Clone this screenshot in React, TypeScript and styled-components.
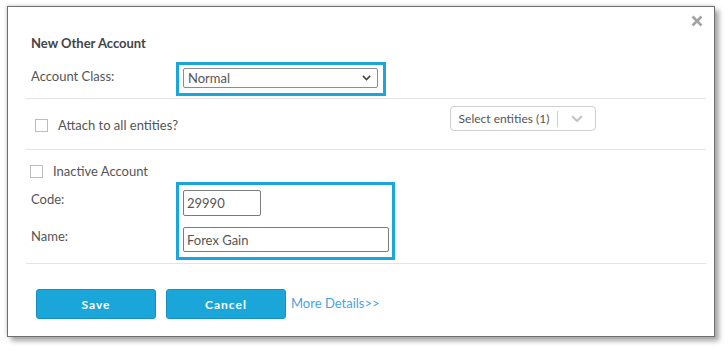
import React from "react";
import styled, { createGlobalStyle } from "styled-components";

const GlobalStyle = createGlobalStyle`
  html, body {
    margin: 0;
    padding: 0;
    background: #ffffff;
    font-family: Lato, "Open Sans", Arial, sans-serif;
  }
`;

const Page = styled.div`
  width: 728px;
  height: 351px;
  padding: 6px 0 0 7px;
  box-sizing: border-box;
`;

const Dialog = styled.div`
  position: relative;
  width: 708px;
  height: 331px;
  box-sizing: border-box;
  background: #fff;
  border: 1px solid #6f6f6f;
  box-shadow: 4px 4px 5px rgba(0, 0, 0, 0.35), -1px -1px 3px rgba(0, 0, 0, 0.15);
`;

const Close = styled.button`
  position: absolute;
  top: 8px;
  right: 10px;
  width: 14px;
  height: 14px;
  padding: 0;
  border: 0;
  background: none;
  cursor: pointer;
`;

const Content = styled.div`
  margin: 0 8px 0 18px;
  padding-top: 28px;
  color: #555;
  font-size: 13px;
  line-height: 16px;
`;

const Title = styled.div`
  padding-left: 5px;
  font-weight: 700;
  color: #444;
  margin-bottom: 11px;
`;

const Row = styled.div`
  display: flex;
  align-items: flex-start;
`;

const Label = styled.div<{ $top?: number }>`
  width: 145px;
  padding-left: 5px;
  padding-top: ${(p) => p.$top ?? 0}px;
`;

const LabelCol = styled.div`
  display: flex;
  flex-direction: column;
  padding-top: 9px;
  gap: 21px;
`;

const Highlight = styled.div<{ $w: number; $pad: string }>`
  width: ${(p) => p.$w}px;
  box-sizing: border-box;
  border: 3px solid #1aa6da;
  padding: ${(p) => p.$pad};
  display: flex;
  flex-direction: column;
  align-items: flex-start;
  gap: 11px;
`;

const Select = styled.div`
  width: 195px;
  height: 20px;
  box-sizing: border-box;
  border: 1px solid #8d8d8d;
  border-radius: 2px;
  display: flex;
  align-items: center;
  justify-content: space-between;
  padding: 0 6px 0 4px;
  color: #555;
`;

const Input = styled.div<{ $w: number; $h: number }>`
  width: ${(p) => p.$w}px;
  height: ${(p) => p.$h}px;
  box-sizing: border-box;
  border: 1px solid #7b7b7b;
  border-radius: 2px;
  display: flex;
  align-items: center;
  padding-left: 3px;
  color: #555;
`;

const Divider = styled.div<{ $mt: number }>`
  height: 1px;
  background: #e4e4e4;
  margin-top: ${(p) => p.$mt}px;
`;

const EntityRow = styled.div`
  height: 50px;
  display: flex;
  align-items: flex-start;
`;

const CheckLine = styled.label<{ $top: number; $left: number }>`
  display: flex;
  align-items: center;
  gap: 10px;
  padding-top: ${(p) => p.$top}px;
  padding-left: ${(p) => p.$left}px;
`;

const Box = styled.span`
  width: 11px;
  height: 11px;
  border: 1px solid #bdbdbd;
  background: #fff;
  display: inline-block;
`;

const MultiSelect = styled.div`
  margin: 7px 110px 0 auto;
  width: 146px;
  height: 25px;
  box-sizing: border-box;
  border: 1px solid #cfcfcf;
  border-radius: 4px;
  display: flex;
  align-items: center;
  font-size: 12px;
  color: #555;
`;

const MultiText = styled.span`
  width: 106px;
  text-align: center;
  border-right: 1px solid #cfcfcf;
  line-height: 16px;
`;

const MultiArrow = styled.span`
  flex: 1;
  display: flex;
  justify-content: center;
`;

const InactiveLine = styled(CheckLine)`
  margin-bottom: 3px;
`;

const Actions = styled.div`
  display: flex;
  align-items: center;
  padding: 25px 0 0 10px;
`;

const Button = styled.button`
  width: 120px;
  height: 30px;
  margin-right: 10px;
  background: #1ba6da;
  border: 1px solid #1690c2;
  border-radius: 3px;
  color: #fff;
  font-family: Lato, "Open Sans", Arial, sans-serif;
  font-weight: 700;
  font-size: 12px;
  letter-spacing: 1px;
  cursor: pointer;
`;

const MoreLink = styled.a`
  margin-left: -5px;
  margin-top: -2px;
  color: #4aa3df;
  font-size: 13px;
  text-decoration: none;
`;

const Chevron = ({ color, w }: { color: string; w: number }) => (
  <svg width={w} height={w * 0.6} viewBox="0 0 10 6">
    <path d="M1 1l4 4 4-4" fill="none" stroke={color} strokeWidth="1.8" />
  </svg>
);

export default function App() {
  return (
    <Page>
      <GlobalStyle />
      <Dialog>
        <Close aria-label="close">
          <svg width="12" height="12" viewBox="0 0 12 12">
            <path d="M1.5 1.5l9 9M10.5 1.5l-9 9" stroke="#a3a3a3" strokeWidth="2.6" />
          </svg>
        </Close>
        <Content>
          <Title>New Other Account</Title>
          <Row>
            <Label $top={6}>Account Class:</Label>
            <Highlight $w={210} $pad="3px 5px 5px 4px">
              <Select>
                <span>Normal</span>
                <Chevron color="#444" w={9} />
              </Select>
            </Highlight>
          </Row>
          <Divider $mt={2} />
          <EntityRow>
            <CheckLine $top={18} $left={9}>
              <Box />
              Attach to all entities?
            </CheckLine>
            <MultiSelect>
              <MultiText>Select entities (1)</MultiText>
              <MultiArrow>
                <Chevron color="#c4c4c4" w={12} />
              </MultiArrow>
            </MultiSelect>
          </EntityRow>
          <Divider $mt={0} />
          <InactiveLine $top={13} $left={4}>
            <Box />
            Inactive Account
          </InactiveLine>
          <Row>
            <LabelCol>
              <Label>Code:</Label>
              <Label>Name:</Label>
            </LabelCol>
            <Highlight $w={219} $pad="5px 3px 5px 4px">
              <Input $w={78} $h={26}>29990</Input>
              <Input $w={206} $h={25}>Forex Gain</Input>
            </Highlight>
          </Row>
          <Divider $mt={3} />
          <Actions>
            <Button>Save</Button>
            <Button>Cancel</Button>
            <MoreLink href="#">More Details&gt;&gt;</MoreLink>
          </Actions>
        </Content>
      </Dialog>
    </Page>
  );
}
